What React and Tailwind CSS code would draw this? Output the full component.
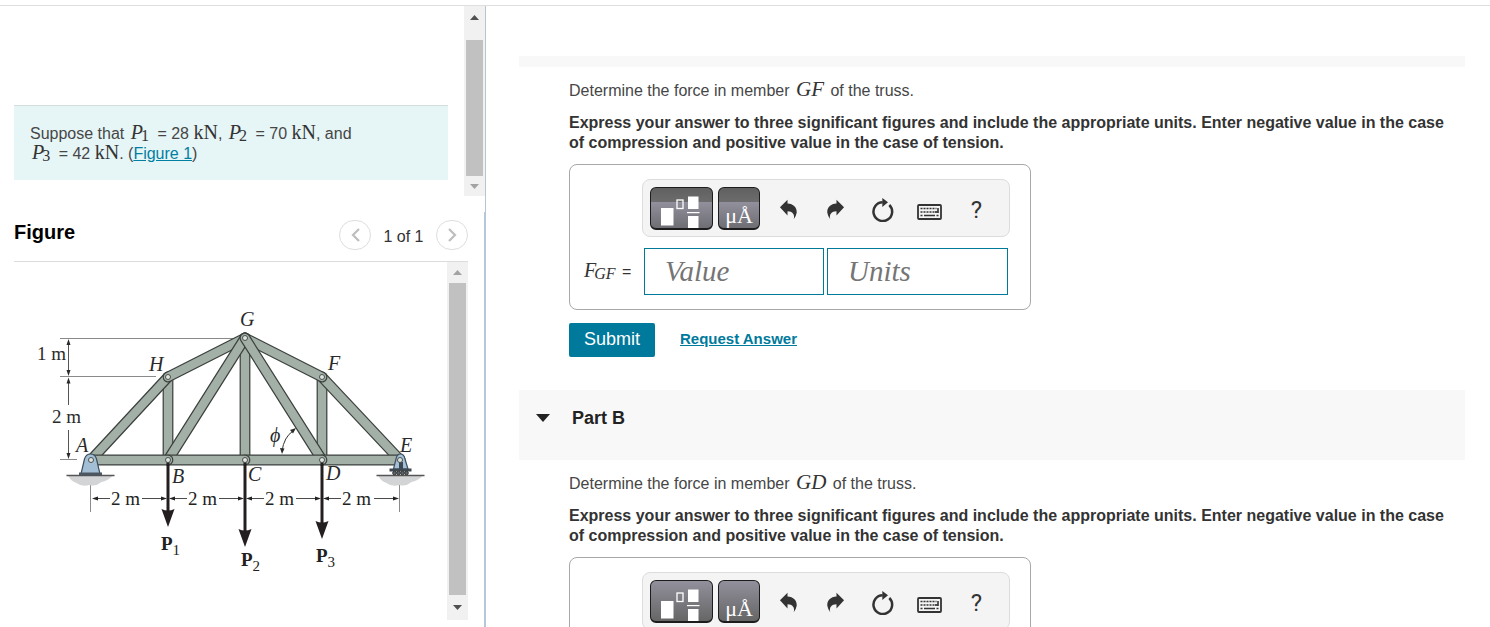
import clsx from "clsx";

const joints = {
  A: [91, 460],
  B: [168, 460],
  C: [245, 460],
  D: [322, 460],
  E: [400, 460],
  F: [322, 377],
  G: [245, 338],
  H: [168, 377],
};

// Back to front
const members = ["HB", "GC", "FD", "AH", "FE", "HG", "GF", "GB", "GD"];
const chord = ["DE", "CD", "BC", "AB"];

const Member = ({ name }) => {
  const [x1, y1] = joints[name[0]];
  const [x2, y2] = joints[name[1]];
  return (
    <g strokeLinecap="round">
      <line x1={x1} y1={y1} x2={x2} y2={y2} stroke="#3b403d" strokeWidth="10.8" />
      <line x1={x1} y1={y1} x2={x2} y2={y2} stroke="#a2b0a7" strokeWidth="8.4" />
    </g>
  );
};

const Dim = ({ x1, x2, y }) => (
  <g stroke="#4a4a4a" fill="#222" strokeWidth="1">
    <line x1={x1 + 3} y1={y} x2={x1 + 19} y2={y} />
    <line x1={x2 - 26} y1={y} x2={x2 - 3} y2={y} />
    <path d={`M${x1 + 1} ${y}l6 -2v4z`} stroke="none" />
    <path d={`M${x2 - 1} ${y}l-6 -2v4z`} stroke="none" />
    <text x={x1 + 20} y={y + 6} stroke="none" fontSize="19">
      2 m
    </text>
  </g>
);

const Load = ({ x, tip, n, labelX, labelY }) => (
  <g fill="#231f20">
    <line x1={x} y1="461" x2={x} y2={tip - 14} stroke="#231f20" strokeWidth="3" />
    <path d={`M${x} ${tip}l-6.5 -18q6.500 3 13 0z`} />
    <text x={labelX} y={labelY} fontSize="19" fontWeight="bold">
      P
      <tspan fontSize="15" fontWeight="normal" dy="5">
        {n}
      </tspan>
    </text>
  </g>
);

const Ground = ({ x }) => (
  <g>
    <path
      d={`M${x - 22} 476h44q-5 5 -11 6q-6 5 -12 3q-8 2 -13 -2q-6 -2 -8 -7z`}
      fill="#d3d4d6"
    />
    <line x1={x - 24} y1="475.500" x2={x + 24} y2="475.500" stroke="#555" strokeWidth="1.500" />
  </g>
);

const Truss = () => (
  <svg
    viewBox="14 262 433 358"
    className="w-[433px] shrink-0"
    role="img"
    aria-label="Truss"
    fontFamily="'Liberation Serif', serif"
    fill="#2a2a2a"
  >
    <g stroke="#8a8a8a" strokeWidth="1">
      <path d="M60 338.500H241M60 376.500H156M60 459.500H77M90.500 484V512M399.500 484V512" />
    </g>
    <g stroke="#555" strokeWidth="1">
      <path d="M68.500 341V374M68.500 379V405M68.500 430V457" />
    </g>
    <path d="M68.500 339l-2 6h4zM68.500 376l-2 -6h4zM68.500 377.500l-2 6h4zM68.500 459l-2 -6h4z" />

    {members.map((m) => (
      <Member key={m} name={m} />
    ))}
    {chord.map((m) => (
      <Member key={m} name={m} />
    ))}

    <Ground x={90.5} />
    <Ground x={400.5} />
    <path
      d="M81 474L84.500 459q1.500 -5 6 -5t6 5L100 474z"
      fill="#a3bfd6"
      stroke="#3f4e5c"
      strokeWidth="1.200"
    />
    <path d="M79 472.500h23v3h-23z" fill="#4b5660" />
    <path
      d="M393.500 469L396 459q1 -5 4.500 -5t4.500 5L408 469z"
      fill="#a3c0d8"
      stroke="#3f4e5c"
      strokeWidth="1.200"
    />
    <path d="M399 462h4v7h-4z" fill="#3e4850" />
    <path d="M389.500 468.500h22v3h-22z" fill="#3e4850" />
    <g fill="#5a646c" stroke="#333">
      <circle cx="394.500" cy="473" r="1.800" />
      <circle cx="398.500" cy="473" r="1.800" />
      <circle cx="402.500" cy="473" r="1.800" />
      <circle cx="406.500" cy="473" r="1.800" />
    </g>

    <Load x={168} tip={527} n="1" labelX={161} labelY={550} />
    <Load x={245} tip={547} n="2" labelX={241} labelY={566} />
    <Load x={322} tip={539} n="3" labelX={316} labelY={562} />

    {Object.entries(joints).map(([name, [x, y]]) => (
      <circle key={name} cx={x} cy={y} r="2.500" fill="#dfe4e1" stroke="#4a4f4c" />
    ))}

    <path d="M282 451Q284 437 293 431" fill="none" stroke="#333" />
    <path d="M282 454l-2 -6l4.500 .5zM296 428l-3 5.500l-3 -3.500z" />

    <Dim x1={91} x2={168} y={498.5} />
    <Dim x1={168} x2={245} y={498.5} />
    <Dim x1={245} x2={322} y={498.5} />
    <Dim x1={322} x2={400} y={498.5} />

    <g fontSize="19">
      <text x="37" y="360">1 m</text>
      <text x="52" y="423">2 m</text>
    </g>
    <g fontSize="20" fontStyle="italic">
      <text x="76" y="452">A</text>
      <text x="172" y="483">B</text>
      <text x="248" y="481">C</text>
      <text x="326" y="480">D</text>
      <text x="400" y="452">E</text>
      <text x="328" y="370">F</text>
      <text x="240" y="326">G</text>
      <text x="149" y="371">H</text>
      <text x="270" y="442">ϕ</text>
    </g>
  </svg>
);

const Arrow = ({ down, dark }) => (
  <svg
    width="9"
    height="5"
    viewBox="0 0 9 5"
    className={clsx(dark ? "fill-[#505050]" : "fill-[#a3a3a3]")}
    aria-hidden="true"
  >
    <path d={down ? "M0 0h9L4.500 5z" : "M0 5h9L4.500 0z"} />
  </svg>
);

const Chevron = ({ left }) => (
  <svg width="9" height="14" viewBox="0 0 9 14" className={clsx(left && "-scale-x-100")} aria-hidden="true">
    <path d="M1 1L7 7L1 13" fill="none" stroke="#bdbdbd" strokeWidth="2.200" />
  </svg>
);

const ScrollBar = ({ top, bottom, lead, tail, className }) => (
  <div className={clsx("flex w-[21px] shrink-0 flex-col items-center bg-[#f1f1f1]", className)}>
    <div className={clsx("flex shrink-0 items-center justify-center", lead)}>
      <Arrow dark={top} />
    </div>
    <div className="w-[17px] grow bg-[#c1c1c1]" />
    <div className={clsx("flex shrink-0 items-center justify-center", tail)}>
      <Arrow down dark={bottom} />
    </div>
  </div>
);

const Var = ({ children, sub }) => (
  <span
    className={clsx(
      "mx-[2px] font-['Liberation_Serif',serif] leading-0 text-[#333]",
      sub ? "text-xl" : "text-[21px]"
    )}
  >
    <i>{children}</i>
    {sub && <sub className="bottom-0 -ml-[2px] mr-[2px] align-[-2px] text-base leading-0">{sub}</sub>}
  </span>
);

const KN = () => (
  <span className="font-['Liberation_Serif',serif] text-xl leading-0 text-[#333]">kN</span>
);

const UndoIcon = ({ flip }) => (
  <svg
    width="19"
    height="21"
    viewBox="58 116 56 64"
    className={clsx("fill-[#333]", flip && "-scale-x-100")}
    aria-hidden="true"
  >
    <path d="M60 141L83 118V130C101 131 112 142 111 158Q109 169 102 178C106 162 98 153 83 153V166Z" />
  </svg>
);

const ResetIcon = () => (
  <svg width="22" height="24" viewBox="336 113 66 72" aria-hidden="true">
    <path d="M388 134A28 28 0 1 1 368 126" fill="none" stroke="#333" strokeWidth="7.500" />
    <path d="M367 113L384 126L367 140Z" fill="#333" />
  </svg>
);

const KeyboardIcon = () => (
  <svg width="25" height="16" viewBox="0 0 25 16" className="mt-1" aria-hidden="true">
    <rect x="1" y="1" width="23" height="14" rx="1" fill="none" stroke="#333" strokeWidth="1.800" />
    <path
      d="M3.500 4.500h16M3.500 8h16M3.500 11.500h2M19.500 11.500h2"
      stroke="#333"
      strokeWidth="1.600"
      strokeDasharray="2 1"
    />
    <path d="M7 11.500h11M21 4v5M18 8h3" stroke="#333" strokeWidth="1.600" fill="none" />
  </svg>
);

const toolStyle = "h-[43px] shrink-0 rounded-md border border-b-2 border-[#1c1c1c]";

const Toolbar = ({ hover }) => {
  const fill = hover
    ? "bg-[linear-gradient(#606060_0,#6c6c6c_34%,#92909c_35%,#6e6e74_100%)]"
    : "bg-linear-to-b from-[#92909c] to-[#666]";
  return (
    <div className="flex h-[58px] w-[368px] items-center rounded-lg border border-[#dcdcdc] bg-[#f4f4f4] pl-[7px]">
      <button aria-label="Templates" className={clsx(toolStyle, fill, "mr-[5px] w-[63px]")}>
        <svg width="60" height="40" viewBox="0 0 60 40" className="block" aria-hidden="true">
          <g fill="#fff">
            <rect x="10" y="20" width="12.500" height="17.500" />
            <rect x="37" y="8.500" width="10.500" height="12.500" />
            <rect x="36" y="24" width="12.500" height="1.200" />
            <rect x="37" y="28" width="10.500" height="12" />
          </g>
          <rect x="26" y="12" width="6" height="8.500" fill="none" stroke="#fff" strokeWidth="1.300" />
        </svg>
      </button>
      <button
        aria-label="Symbols"
        className={clsx(
          toolStyle,
          fill,
          "mr-[5px] flex w-[42px] items-end justify-center overflow-hidden font-['Liberation_Serif',serif] text-[22px] leading-6 text-white"
        )}
      >
        μÅ
      </button>
      <div className="flex items-center pt-[3px]">
        <button aria-label="Undo" className="flex w-[47px] justify-center">
          <UndoIcon />
        </button>
        <button aria-label="Redo" className="flex w-[47px] justify-center">
          <UndoIcon flip />
        </button>
        <button aria-label="Reset" className="flex w-[47px] justify-center">
          <ResetIcon />
        </button>
        <button aria-label="Keyboard shortcuts" className="flex w-[47px] justify-center">
          <KeyboardIcon />
        </button>
        <button className="w-[47px] text-center font-[Roboto,sans-serif] text-2xl leading-6 text-[#333]">?</button>
      </div>
    </div>
  );
};

const inputStyle =
  "h-[47px] border border-[#007a99] pl-5 font-['Liberation_Serif',serif] text-[29px] italic placeholder:text-[#757575]";

const Question = ({ member, hover }) => (
  <div className="pl-[50px] text-base leading-5 text-[#333]">
    <p className="text-[#464646]">
      Determine the force in member <Var>{member}</Var> of the truss.
    </p>
    <p className="mt-3 pr-2 font-bold">
      Express your answer to three significant figures and include the appropriate units. Enter negative value in the
      case of compression and positive value in the case of tension.
    </p>
    <div className="mt-[11px] w-[462px] rounded-lg border border-[#a8a8a8] py-[14px] pr-5">
      <div className="flex justify-end">
        <Toolbar hover={hover} />
      </div>
      <div className="mt-[11px] flex items-center pl-[14px]">
        <label htmlFor={`value-${member}`} className="w-[60px] shrink-0 whitespace-nowrap">
          <span className="font-['Liberation_Serif',serif] text-xl leading-0 italic">
            F<sub className="bottom-0 -ml-[2px] mr-[2px] align-[-2px] text-base leading-0">{member}</sub>
          </span>{" "}
          =
        </label>
        <input id={`value-${member}`} placeholder="Value" className={clsx(inputStyle, "w-[180px]")} />
        <input aria-label="Units" placeholder="Units" className={clsx(inputStyle, "ml-[3px] w-[181px]")} />
      </div>
    </div>
  </div>
);

const App = () => {
  return (
    <div className="h-screen overflow-hidden bg-white pt-[5px] font-['Liberation_Sans',Arial,sans-serif]">
      <div className="flex h-full border-t border-[#dfdfdf]">
        <aside className="flex w-[486px] shrink-0 flex-col">
          <section className="flex border-r border-[#b8c4cf] pb-4 pl-[14px]">
            <div className="mt-[99px] mr-4 h-[75px] grow border-t border-[#d5dcdc] bg-[#e6f5f6] px-4 pt-[18px] text-base leading-5 text-[#464646]">
              Suppose that <Var sub="1">P</Var> = 28 <KN />, <Var sub="2">P</Var> = 70 <KN />, and
              <br />
              <Var sub="3">P</Var> = 42 <KN />. (
              <a href="#figure" className="text-[#007fa3] underline">
                Figure 1
              </a>
              )
            </div>
            <ScrollBar top lead="h-[34px] pb-[11px]" tail="h-5" className="h-[190px]" />
          </section>

          <section id="figure" className="grow border-r-2 border-[#b5c7d9] pr-4 pl-[14px]">
            <div className="flex h-[50px] items-center border-b border-[#dcdcdc]">
              <h2 className="grow pb-[10px] text-xl font-bold text-black">Figure</h2>
              <div className="flex items-center pb-1">
                <button
                  aria-label="Previous figure"
                  className="flex h-[30px] w-8 items-center justify-center rounded-full border border-[#dedede]"
                >
                  <Chevron left />
                </button>
                <span className="w-[65px] pt-1 text-center text-base text-[#333]">1 of 1</span>
                <button
                  aria-label="Next figure"
                  className="flex h-[30px] w-8 items-center justify-center rounded-full border border-[#dedede]"
                >
                  <Chevron />
                </button>
              </div>
            </div>
            <div className="flex">
              <Truss />
              <ScrollBar bottom lead="h-[21px]" tail="h-[25px]" />
            </div>
          </section>
        </aside>

        <main className="min-w-0 grow overflow-y-auto pt-[50px] pr-[25px] pl-[33px] [scrollbar-width:none]">
          <div className="mb-[14px] h-[11px] bg-[#f8f8f8]" />
          <Question member="GF" hover />
          <div className="mt-[13px] flex items-center gap-[25px] pl-[50px]">
            <button className="h-[34px] w-[86px] rounded-xs bg-[#007a9c] pb-[2px] text-lg leading-5 text-white">
              Submit
            </button>
            <a href="#answer" className="pb-[2px] text-[15px] font-bold text-[#007a9c] underline">
              Request Answer
            </a>
          </div>
          <div className="mt-[33px] mb-[14px] flex h-[70px] items-start bg-[#f8f8f8] pt-4 pl-[17px]">
            <button className="flex items-center gap-[22px] text-lg leading-6 font-bold text-[#222]">
              <svg width="14" height="8" viewBox="0 0 14 8" fill="#222" aria-hidden="true">
                <path d="M0 0h14L7 8z" />
              </svg>
              Part B
            </button>
          </div>
          <Question member="GD" />
        </main>
      </div>
    </div>
  );
};

export default App;
